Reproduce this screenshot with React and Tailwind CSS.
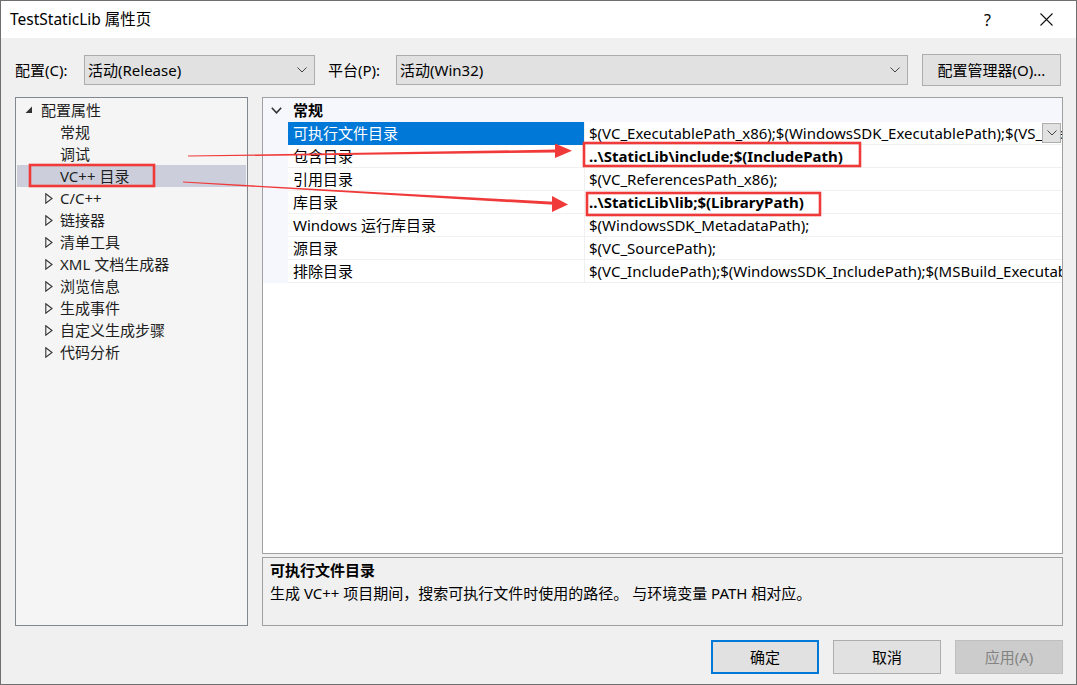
import React from "react";

const FONT = { fontFamily: '"Noto Sans", "Noto Sans CJK SC", sans-serif' };

const treeItems = [
  { label: "配置属性", level: 0, open: true },
  { label: "常规", level: 1 },
  { label: "调试", level: 1 },
  { label: "VC++ 目录", level: 1, selected: true },
  { label: "C/C++", level: 1, closed: true },
  { label: "链接器", level: 1, closed: true },
  { label: "清单工具", level: 1, closed: true },
  { label: "XML 文档生成器", level: 1, closed: true },
  { label: "浏览信息", level: 1, closed: true },
  { label: "生成事件", level: 1, closed: true },
  { label: "自定义生成步骤", level: 1, closed: true },
  { label: "代码分析", level: 1, closed: true },
];

const rows = [
  { name: "可执行文件目录", value: "$(VC_ExecutablePath_x86);$(WindowsSDK_ExecutablePath);$(VS_ExecutablePath)", selected: true },
  { name: "包含目录", value: "..\\StaticLib\\include;$(IncludePath)", bold: true },
  { name: "引用目录", value: "$(VC_ReferencesPath_x86);" },
  { name: "库目录", value: "..\\StaticLib\\lib;$(LibraryPath)", bold: true },
  { name: "Windows 运行库目录", value: "$(WindowsSDK_MetadataPath);" },
  { name: "源目录", value: "$(VC_SourcePath);" },
  { name: "排除目录", value: "$(VC_IncludePath);$(WindowsSDK_IncludePath);$(MSBuild_ExecutablePath)" },
];

function Chevron() {
  return (
    <svg width="10" height="6" viewBox="0 0 10 6">
      <polyline points="0.5,0.5 5,5 9.5,0.5" fill="none" stroke="#444" strokeWidth="1" />
    </svg>
  );
}

function Select({ value, width }) {
  return (
    <div className={`${width} h-[30px] bg-[#e1e1e1] border border-[#adadad] flex items-center pl-[3px] pr-[7px]`}>
      <span className="text-[15px] text-black flex-1">{value}</span>
      <Chevron />
    </div>
  );
}

function TreeRow({ item }) {
  return (
    <div className={`h-[22px] flex items-center mx-[1px] ${item.selected ? "bg-[#cccedb]" : ""}`}>
      {item.level === 0 ? (
        <div className="w-[24px] flex pl-[8px]">
          <svg width="8" height="8" viewBox="0 0 8 8">
            <polygon points="7,0.5 7,7 0.5,7" fill="#333" />
          </svg>
        </div>
      ) : (
        <div className="w-[43px] flex pl-[28px]">
          {item.closed && (
            <svg width="8" height="11" viewBox="0 0 8 11">
              <polygon points="0.8,0.8 7,5.5 0.8,10.2" fill="none" stroke="#333" strokeWidth="1.1" />
            </svg>
          )}
        </div>
      )}
      <span className="text-[15px] text-[#1e1e1e] whitespace-nowrap">{item.label}</span>
    </div>
  );
}

export default function App() {
  return (
    <div className="w-[1077px] h-[685px] relative bg-[#f0f0f0] border border-[#6f6f6f] flex flex-col overflow-hidden" style={FONT}>
      {/* title bar */}
      <div className="h-[37px] bg-white flex items-center pl-[9px] shrink-0">
        <span className="text-[15.5px] text-black">TestStaticLib 属性页</span>
        <div className="ml-auto flex items-center">
          <span className="text-[16px] text-black mr-[49px]">?</span>
          <svg width="13" height="13" viewBox="0 0 13 13" className="mr-[23px]">
            <path d="M0.5 0.5 L12.5 12.5 M12.5 0.5 L0.5 12.5" stroke="#111" strokeWidth="1.1" />
          </svg>
        </div>
      </div>

      <div className="flex-1 flex flex-col pl-[14px] pr-[13px]">
        {/* config row */}
        <div className="mt-[16px] flex items-center h-[32px]">
          <span className="w-[69px] text-[15px] text-black">配置(C):</span>
          <Select value="活动(Release)" width="w-[231px]" />
          <span className="ml-[13px] w-[68px] text-[15px] text-black">平台(P):</span>
          <Select value="活动(Win32)" width="w-[512px]" />
          <div className="ml-[14px] w-[139px] h-[32px] bg-[#e1e1e1] border border-[#adadad] flex items-center justify-center text-[15px] text-black">
            配置管理器(O)...
          </div>
        </div>

        {/* main area */}
        <div className="mt-[11px] flex gap-[14px] h-[529px]">
          <div className="w-[233px] bg-[#f5f5f5] border border-[#828790] pt-[1px]">
            {treeItems.map((it, i) => (
              <TreeRow key={i} item={it} />
            ))}
          </div>

          <div className="w-[801px] flex flex-col gap-[3px]">
            <div className="h-[457px] bg-white border border-[#a0a0a0] overflow-hidden">
              <div className="h-[24px] bg-[#f5f7fc] flex items-center">
                <div className="w-[25px] flex justify-center pl-[2px]">
                  <svg width="11" height="7" viewBox="0 0 11 7">
                    <polyline points="0.8,0.8 5.5,5.8 10.2,0.8" fill="none" stroke="#333" strokeWidth="1.6" />
                  </svg>
                </div>
                <span className="pl-[5px] text-[15px] font-bold text-black">常规</span>
              </div>
              {rows.map((r, i) => (
                <div key={i} className="h-[23px] flex">
                  <div className="w-[25px] bg-[#f5f7fc] shrink-0" />
                  <div
                    className={`w-[296px] shrink-0 flex items-center pl-[5px] border-b ${
                      r.selected ? "bg-[#0078d7] text-white border-[#0078d7]" : "text-black border-[#f0f0f0]"
                    }`}
                  >
                    <span className="text-[15px] whitespace-nowrap">{r.name}</span>
                  </div>
                  <div className="flex-1 min-w-0 flex items-center border-l border-b border-[#f0f0f0] pl-[4px] relative overflow-hidden">
                    <span className={`text-[15px] whitespace-nowrap text-black ${r.bold ? "font-bold" : ""}`}>{r.value}</span>
                    {r.selected && (
                      <div className="absolute right-[1px] top-[1px] w-[19px] h-[20px] bg-[#e1e1e1] border border-[#adadad] flex items-center justify-center">
                        <Chevron />
                      </div>
                    )}
                  </div>
                </div>
              ))}
            </div>

            <div className="h-[69px] bg-[#f0f0f0] border border-[#a0a0a0] px-[7px] pt-[1px]">
              <div className="text-[15px] font-bold text-black leading-[22px]">可执行文件目录</div>
              <div className="text-[15px] text-black leading-[24px]">
                生成 VC++ 项目期间，搜索可执行文件时使用的路径。 与环境变量 PATH 相对应。
              </div>
            </div>
          </div>
        </div>

        {/* buttons */}
        <div className="mt-[14px] flex justify-end gap-[14px]">
          <div className="w-[108px] h-[34px] bg-[#e1e1e1] border-2 border-[#0078d7] flex items-center justify-center text-[15px] text-black">
            确定
          </div>
          <div className="w-[108px] h-[34px] bg-[#e1e1e1] border border-[#adadad] flex items-center justify-center text-[15px] text-black">
            取消
          </div>
          <div className="w-[108px] h-[34px] bg-[#cccccc] border border-[#bfbfbf] flex items-center justify-center text-[15px] text-[#838383]">
            应用(A)
          </div>
        </div>
      </div>

      {/* red annotations */}
      <svg className="absolute left-[-1px] top-[-1px] pointer-events-none" width="1077" height="685" viewBox="0 0 1077 685">
        <rect x="30" y="165" width="124" height="21" fill="none" stroke="#f03a3a" strokeWidth="2.6" />
        <rect x="584" y="143" width="276" height="23" fill="none" stroke="#f03a3a" strokeWidth="2.6" />
        <rect x="587" y="193" width="233" height="22" fill="none" stroke="#f03a3a" strokeWidth="2.6" />
        <polygon points="188,155.6 556,149.6 556,152.6 188,156.6" fill="#f03a3a" />
        <polygon points="555,143.5 572,150.8 555,158" fill="#f03a3a" />
        <polygon points="183,181.6 554,201.8 554,204.8 183,182.6" fill="#f03a3a" />
        <polygon points="552,196 568,204.5 552,212" fill="#f03a3a" />
      </svg>
    </div>
  );
}
